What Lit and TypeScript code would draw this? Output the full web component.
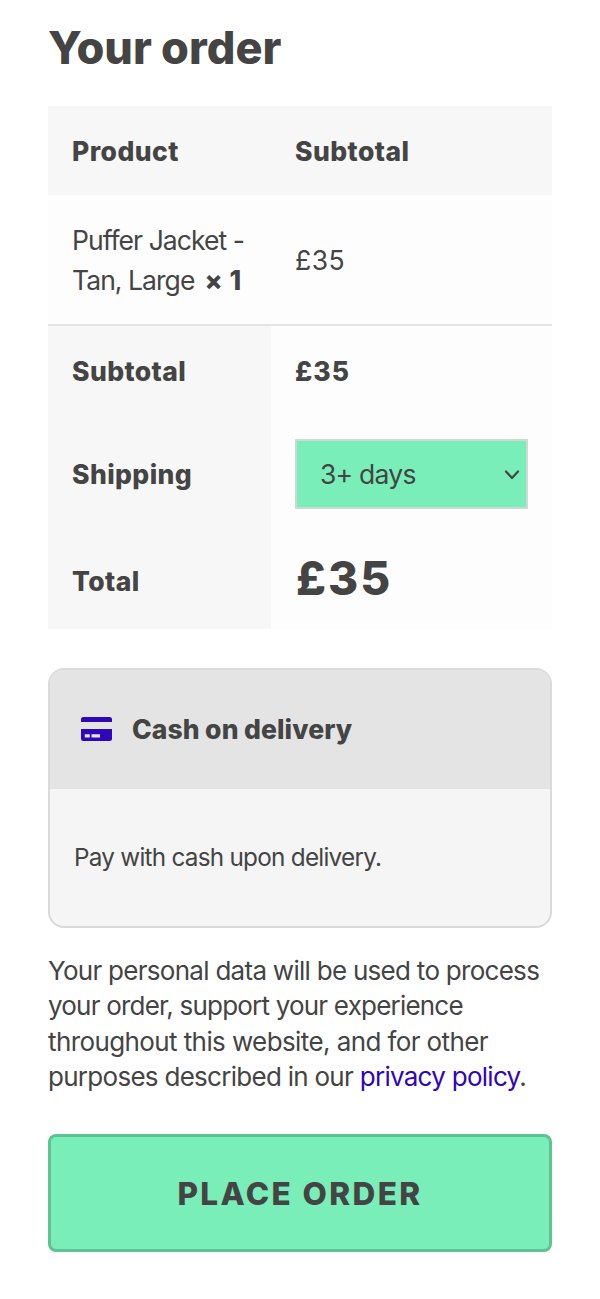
import { LitElement, html, css } from "lit";
import { customElement } from "lit/decorators.js";

@customElement("app-root")
export class AppRoot extends LitElement {
  static styles = css`
    :host { display: block; width: 600px; height: 1299px; overflow: hidden; background: #fff; color: #444; font-family: Inter, "Liberation Sans", sans-serif; font-size: 26.5px; letter-spacing: -0.65px; }
    * { box-sizing: border-box; }
    .page { padding: 18px 48px 0; }
    h2 { margin: 0; height: 88px; line-height: 60px; font-size: 45px; font-weight: 800; letter-spacing: 0.1px; word-spacing: -1px; }
    .row { display: grid; grid-template-columns: 223px 281px; background: #fdfdfd; white-space: nowrap; }
    .row > div { padding: 0 24px; display: flex; align-items: center; }
    .head, .label, .sub, .name { font-size: 26.5px; font-weight: 800; letter-spacing: 0.45px; }
    .head { height: 89px; background: #f7f7f7; }
    .item { height: 131px; border-bottom: 2px solid #e4e4e4; line-height: 40.5px; }
    .row > .product { letter-spacing: -0.95px; padding-top: 1px; }
    .row > .price { letter-spacing: 0.5px; padding-top: 1px; }
    .item b { font-weight: 800; margin-left: -3px; word-spacing: 3px; }
    .row > .label { background: #f7f7f7; letter-spacing: 0.4px; }
    .row > .amount { letter-spacing: 1.1px; }
    .sub { height: 89px; }
    .ship { height: 117px; }
    .total { height: 97px; }
    .name { letter-spacing: 0.1px; word-spacing: -0.500px; }
    .row > .sum { font-size: 46px; font-weight: 800; letter-spacing: 2.1px; padding-left: 25px; padding-bottom: 5px; }
    .select { width: 233px; height: 70px; background: #7aeeb8; border: 2px solid #cddad4; display: flex; align-items: center; justify-content: space-between; padding: 0 6px 0 23px; letter-spacing: -0.75px; }
    .pay { margin-top: 39px; height: 260px; border: 2px solid #dadada; border-radius: 16px; background: #f5f5f5; overflow: hidden; }
    .method { height: 119px; background: #e4e4e4; display: flex; align-items: center; padding: 0 0 2px 31px; gap: 20px; }
    .note { height: 137px; display: flex; align-items: center; padding: 0 0 1px 24px; font-size: 24.3px; letter-spacing: -0.75px; }
    .privacy { margin: 25px 0 0; line-height: 35.3px; font-size: 26px; height: 181px; letter-spacing: -0.72px; }
    .line { display: block; white-space: nowrap; }
    .line:nth-child(2) { letter-spacing: -0.8px; }
    .line:nth-child(3) { letter-spacing: -0.6px; }
    a { color: #2f06ba; }
    button { display: block; width: 504px; height: 118px; border: 3px solid #5fc295; border-radius: 8px; background: #7aeeb8; color: #444; font: 800 31.5px Inter, sans-serif; letter-spacing: 2.4px; padding: 0; }
  `;
  render() {
    return html`<div class="page">
      <h2><span>Your order</span></h2>
      <div class="row head"><div>Product</div><div>Subtotal</div></div>
      <div class="row item"><div class="product"><span>Puffer Jacket -<br />Tan, Large&nbsp; <b>× 1</b></span></div><div class="price">£35</div></div>
      <div class="row sub"><div class="label">Subtotal</div><div class="amount">£35</div></div>
      <div class="row ship"><div class="label">Shipping</div><div><div class="select"><span>3+ days</span><svg width="18" height="18" viewBox="0 0 18 18"><path d="M4 6.500l6 6.500 6-6.500" fill="none" stroke="#444" stroke-width="2.2" stroke-linecap="round" stroke-linejoin="round"/></svg></div></div></div>
      <div class="row total"><div class="label">Total</div><div class="sum">£35</div></div>
      <div class="pay"><div class="method"><svg width="31" height="24" viewBox="0 0 31 24"><path fill="#2f06ba" fill-rule="evenodd" d="M2.500 0h26a2.500 2.500 0 0 1 2.500 2.500V5H0V2.500A2.500 2.500 0 0 1 2.500 0zM0 12h31v9.500a2.500 2.500 0 0 1-2.500 2.500h-26A2.500 2.500 0 0 1 0 21.500zM3.800 17.200v3.300h5v-3.300zM10.500 17.200v3.300h8.500v-3.300z"/></svg><span class="name">Cash on delivery</span></div><div class="note">Pay with cash upon delivery.</div></div>
      <p class="privacy"><span class="line">Your personal data will be used to process</span><span class="line">your order, support your experience</span><span class="line">throughout this website, and for other</span><span class="line">purposes described in our <a>privacy policy</a>.</span></p>
      <button>PLACE ORDER</button>
    </div>`;
  }
}
